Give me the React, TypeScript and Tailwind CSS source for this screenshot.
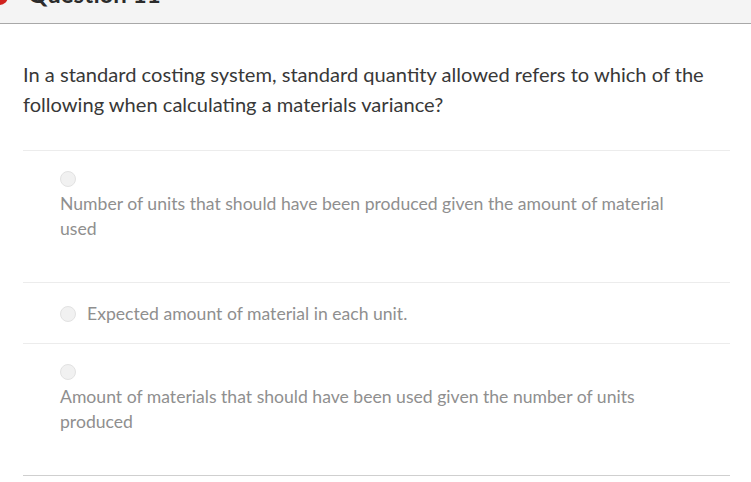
import React from 'react';

const options = [
    { text: "Number of units that should have been produced given the amount of material used", stacked: true },
    { text: "Expected amount of material in each unit.", stacked: false },
    { text: "Amount of materials that should have been used given the number of units produced", stacked: true },
];

function Radio() {
    return <span className="inline-block w-[16px] h-[16px] rounded-full bg-[#f1f1f1] border border-[#e2e2e2] align-middle" />;
}

export default function App() {
    return (
        <div className="min-h-screen w-[751px] bg-white font-['Lato','Noto_Sans',sans-serif]">
            {/* Header, scrolled mostly out of view */}
            <div className="relative h-[24px] overflow-hidden bg-[#f4f4f4] border-b border-[#a8a8a8]">
                <span className="absolute left-[-9px] top-[-12px] w-[17px] h-[17px] rounded-full bg-[#d0221e]" />
                <div className="absolute left-[28px] top-[-18px] text-[24px] leading-[24px] font-bold text-[#2b2b2b]">
                    Question 11
                </div>
            </div>

            <div className="pl-[23px] pr-[21px]">
                <p className="pt-[35px] pb-[31px] text-[20.1px] leading-[30px] text-[#383838]">
                    In a standard costing system, standard quantity allowed refers to which of the following when calculating a materials variance?
                </p>

                <div className="border-t border-[#ececec]">
                    {options.map((opt, i) => (
                        <div
                            key={i}
                            className={`pl-[37px] pr-[40px] text-[17.6px] leading-[25px] text-[#8f8f8f] ${opt.stacked ? 'pt-[15px] pb-[41px]' : 'pt-[18px] pb-[17px]'} ${i === options.length - 1 ? 'border-b border-[#cfcfcf]' : 'border-b border-[#ececec]'}`}
                        >
                            {opt.stacked ? (
                                <>
                                    <div className="h-[25px] flex items-center"><Radio /></div>
                                    <div>{opt.text}</div>
                                </>
                            ) : (
                                <div className="flex items-center gap-[11px]">
                                    <Radio />
                                    <span>{opt.text}</span>
                                </div>
                            )}
                        </div>
                    ))}
                </div>
            </div>
        </div>
    );
}
